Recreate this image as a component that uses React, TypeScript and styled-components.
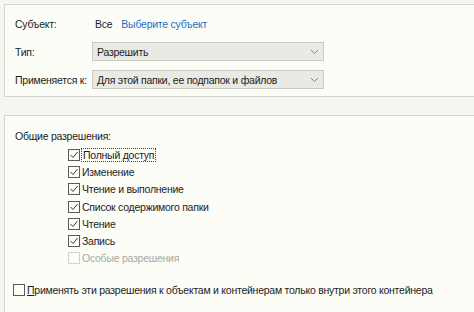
import React from 'react';
import styled, { createGlobalStyle } from 'styled-components';

const GlobalStyle = createGlobalStyle`
  html, body {
    margin: 0;
    padding: 0;
    background: #f5f6f0;
  }
  body {
    font-family: 'Liberation Sans', Arial, sans-serif;
    font-size: 10.5px;
    letter-spacing: -0.25px;
    color: #1c1c1c;
  }
`;

const Page = styled.div`
  width: 474px;
  height: 312px;
  overflow: hidden;
  padding: 4px 0 0 4px;
  box-sizing: border-box;
  display: flex;
  flex-direction: column;
  white-space: nowrap;
`;

const TopPanel = styled.div`
  background: #fdfdf8;
  border: 1px solid #d5d7cd;
  border-right: none;
  height: 93px;
  box-sizing: border-box;
  padding: 5px 0 0 10px;
  display: grid;
  grid-template-columns: 77px 1fr;
  grid-auto-rows: 28px;
  align-items: center;
`;

const Gap = styled.div`
  height: 18px;
  flex-shrink: 0;
`;

const BottomPanel = styled.div`
  flex: 1;
  background: #fdfdf8;
  border-top: 1px solid #d5d7cd;
  border-left: 1px solid #d5d7cd;
  padding: 12px 0 0 10px;
`;

const Label = styled.span`
  line-height: 14px;
`;

const Inline = styled.div`
  display: flex;
  gap: 9px;
  align-items: center;
  padding-left: 3px;
`;

const Link = styled.span`
  color: #1f6fc5;
`;

const Select = styled.div`
  width: 232px;
  height: 19px;
  box-sizing: border-box;
  background: #eaeae4;
  border: 1px solid #c9cac2;
  display: flex;
  align-items: center;
  justify-content: space-between;
  padding: 0 4px 0 4px;
  margin-top: -1px;
`;

const Chevron = () => (
  <svg width="9" height="6" viewBox="0 0 9 6">
    <path d="M1 1 L4.5 4.5 L8 1" fill="none" stroke="#8a8a84" strokeWidth="1" />
  </svg>
);

const Heading = styled.div`
  line-height: 16px;
  margin-bottom: 2px;
`;

const List = styled.div`
  padding-left: 53px;
  display: flex;
  flex-direction: column;
`;

const Row = styled.div<{ $disabled?: boolean }>`
  height: 17.3px;
  display: flex;
  align-items: center;
  gap: 2px;
  color: ${(p) => (p.$disabled ? '#a8a8a4' : '#1c1c1c')};
`;

const Box = styled.span<{ $disabled?: boolean }>`
  width: 12px;
  height: 12px;
  box-sizing: border-box;
  border: 1px solid ${(p) => (p.$disabled ? '#d2d3cd' : '#5a5a5a')};
  background: #fdfdf8;
  display: inline-flex;
  align-items: center;
  justify-content: center;
  flex-shrink: 0;
`;

const Focus = styled.span`
  outline: 1px dotted #444;
  outline-offset: 0;
  padding: 0 1px;
`;

const Bottom = styled.div`
  margin-top: 17px;
  display: flex;
  align-items: center;
  gap: 2px;
  margin-left: -2px;
`;

const Under = styled.span`
  text-decoration: underline;
`;

const Check = () => (
  <svg width="10" height="10" viewBox="0 0 10 10">
    <path d="M1.5 5 L4 7.5 L8.5 2" fill="none" stroke="#3a3a3a" strokeWidth="1" />
  </svg>
);

const items = [
  { label: 'Полный доступ', checked: true, focus: true },
  { label: 'Изменение', checked: true },
  { label: 'Чтение и выполнение', checked: true },
  { label: 'Список содержимого папки', checked: true },
  { label: 'Чтение', checked: true },
  { label: 'Запись', checked: true },
  { label: 'Особые разрешения', checked: false, disabled: true },
];

export default function App() {
  return (
    <>
      <GlobalStyle />
      <Page>
        <TopPanel>
          <Label>Субъект:</Label>
          <Inline>
            <span>Все</span>
            <Link>Выберите субъект</Link>
          </Inline>
          <Label>Тип:</Label>
          <Select>
            <span>Разрешить</span>
            <Chevron />
          </Select>
          <Label>Применяется к:</Label>
          <Select>
            <span>Для этой папки, ее подпапок и файлов</span>
            <Chevron />
          </Select>
        </TopPanel>
        <Gap />
        <BottomPanel>
          <Heading>Общие разрешения:</Heading>
          <List>
            {items.map((it) => (
              <Row key={it.label} $disabled={it.disabled}>
                <Box $disabled={it.disabled}>{it.checked && <Check />}</Box>
                {it.focus ? <Focus>{it.label}</Focus> : <span>{it.label}</span>}
              </Row>
            ))}
          </List>
          <Bottom>
            <Box />
            <span>
              <Under>П</Under>рименять эти разрешения к объектам и контейнерам только внутри этого контейнера
            </span>
          </Bottom>
        </BottomPanel>
      </Page>
    </>
  );
}
